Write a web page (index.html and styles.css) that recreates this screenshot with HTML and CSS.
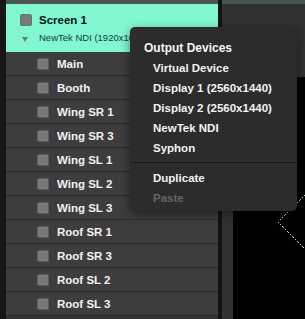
FILE: index.html
```html
<!DOCTYPE html>
<html>
<head>
<meta charset="utf-8">
<link rel="stylesheet" href="styles.css">
</head>
<body>
<div class="app">
  <div class="strip"></div>
  <div class="panel">
    <div class="screen-row">
      <div class="screen-head"><span class="cb"></span><span class="screen-name">Screen 1</span></div>
      <div class="screen-sub"><span class="tri"></span><span class="sub-text">NewTek NDI (1920x1080)</span></div>
    </div>
    <ul class="layers">
      <li class="layer"><span class="cb"></span><span>Main</span></li>
      <li class="layer"><span class="cb"></span><span>Booth</span></li>
      <li class="layer"><span class="cb"></span><span>Wing SR 1</span></li>
      <li class="layer"><span class="cb"></span><span>Wing SR 3</span></li>
      <li class="layer"><span class="cb"></span><span>Wing SL 1</span></li>
      <li class="layer"><span class="cb"></span><span>Wing SL 2</span></li>
      <li class="layer"><span class="cb"></span><span>Wing SL 3</span></li>
      <li class="layer"><span class="cb"></span><span>Roof SR 1</span></li>
      <li class="layer"><span class="cb"></span><span>Roof SR 3</span></li>
      <li class="layer"><span class="cb"></span><span>Roof SL 2</span></li>
      <li class="layer"><span class="cb"></span><span>Roof SL 3</span></li>
    </ul>
  </div>
  <div class="divider"></div>
  <div class="right">
    <div class="canvas">
      <svg class="canvas-svg" width="72" height="242" viewBox="0 0 72 242">
        <polyline points="90,100 45,145 90,190" fill="none" stroke="#66f0d0" stroke-width="1" stroke-dasharray="2 1.5" shape-rendering="crispEdges"/>
      </svg>
    </div>
  </div>
  <div class="menu">
    <div class="menu-header">Output Devices</div>
    <div class="menu-item">Virtual Device</div>
    <div class="menu-item">Display 1 (2560x1440)</div>
    <div class="menu-item">Display 2 (2560x1440)</div>
    <div class="menu-item">NewTek NDI</div>
    <div class="menu-item">Syphon</div>
    <div class="menu-sep"></div>
    <div class="menu-item">Duplicate</div>
    <div class="menu-item disabled">Paste</div>
  </div>
</div>
</body>
</html>
```

FILE: styles.css
```css
html, body {
  margin: 0;
  padding: 0;
  background: #161616;
}
body {
  font-family: "Liberation Sans", Arial, sans-serif;
}
.app {
  position: relative;
  display: flex;
  width: 305px;
  height: 319px;
  overflow: hidden;
}
.strip {
  width: 6px;
  background: #161616;
}
.panel {
  width: 212px;
  box-sizing: border-box;
  border-top: 4px solid #4a5551;
  background: #343434;
  display: flex;
  flex-direction: column;
}
.divider {
  width: 4px;
  background: #121212;
}
.right {
  flex: 1;
  box-sizing: border-box;
  border-top: 4px solid #4a5551;
  background: #313131;
  padding: 73px 0 0 11px;
  display: flex;
  flex-direction: column;
}
.canvas {
  flex: 1;
  background: #000;
}
.canvas-svg {
  display: block;
}
.screen-row {
  height: 48px;
  box-sizing: border-box;
  background: #80f6d1;
  padding-left: 14px;
}
.screen-head {
  display: flex;
  align-items: center;
  gap: 7px;
  margin-top: 10px;
  height: 12px;
}
.screen-name {
  font-size: 11.5px;
  line-height: 12px;
  font-weight: bold;
  color: #111;
}
.screen-sub {
  display: flex;
  align-items: center;
  margin-top: 6px;
  height: 12px;
  padding-left: 2px;
}
.tri {
  width: 0;
  height: 0;
  border-left: 3px solid transparent;
  border-right: 3px solid transparent;
  border-top: 5px solid #6a8078;
  margin-top: 2px;
  margin-right: 11px;
}
.sub-text {
  font-size: 9.5px;
  line-height: 12px;
  color: #1c3848;
  white-space: nowrap;
}
.cb {
  width: 12px;
  height: 12px;
  box-sizing: border-box;
  border: 1px solid #5c5c5c;
  border-radius: 2px;
  background: #787878;
  flex: none;
}
.screen-row .cb {
  border-color: #5f746c;
  background: #767a78;
}
.layers {
  list-style: none;
  margin: 0;
  padding: 0;
}
.layer {
  height: 23px;
  border-bottom: 1px solid #2a2a2a;
  background: #3d3d3d;
  display: flex;
  align-items: center;
  gap: 8px;
  padding-left: 31px;
  font-size: 11.5px;
  font-weight: bold;
  color: #f2f2f2;
  white-space: nowrap;
}
.menu {
  position: absolute;
  left: 130px;
  top: 27px;
  width: 167px;
  height: 184px;
  box-sizing: border-box;
  padding: 11px 0 3px;
  background: #2c2c2c;
  border-radius: 5px;
  box-shadow: 0 3px 10px rgba(0, 0, 0, 0.45);
}
.menu-header {
  padding-left: 14px;
  font-size: 12px;
  line-height: 20px;
  font-weight: bold;
  color: #f4f4f4;
}
.menu-item {
  padding-left: 23px;
  font-size: 11.5px;
  line-height: 20px;
  font-weight: bold;
  color: #f2f2f2;
  white-space: nowrap;
}
.menu-item.disabled {
  color: #666;
}
.menu-sep {
  height: 1px;
  margin: 4px 0 5px;
  background: #171717;
}
```
